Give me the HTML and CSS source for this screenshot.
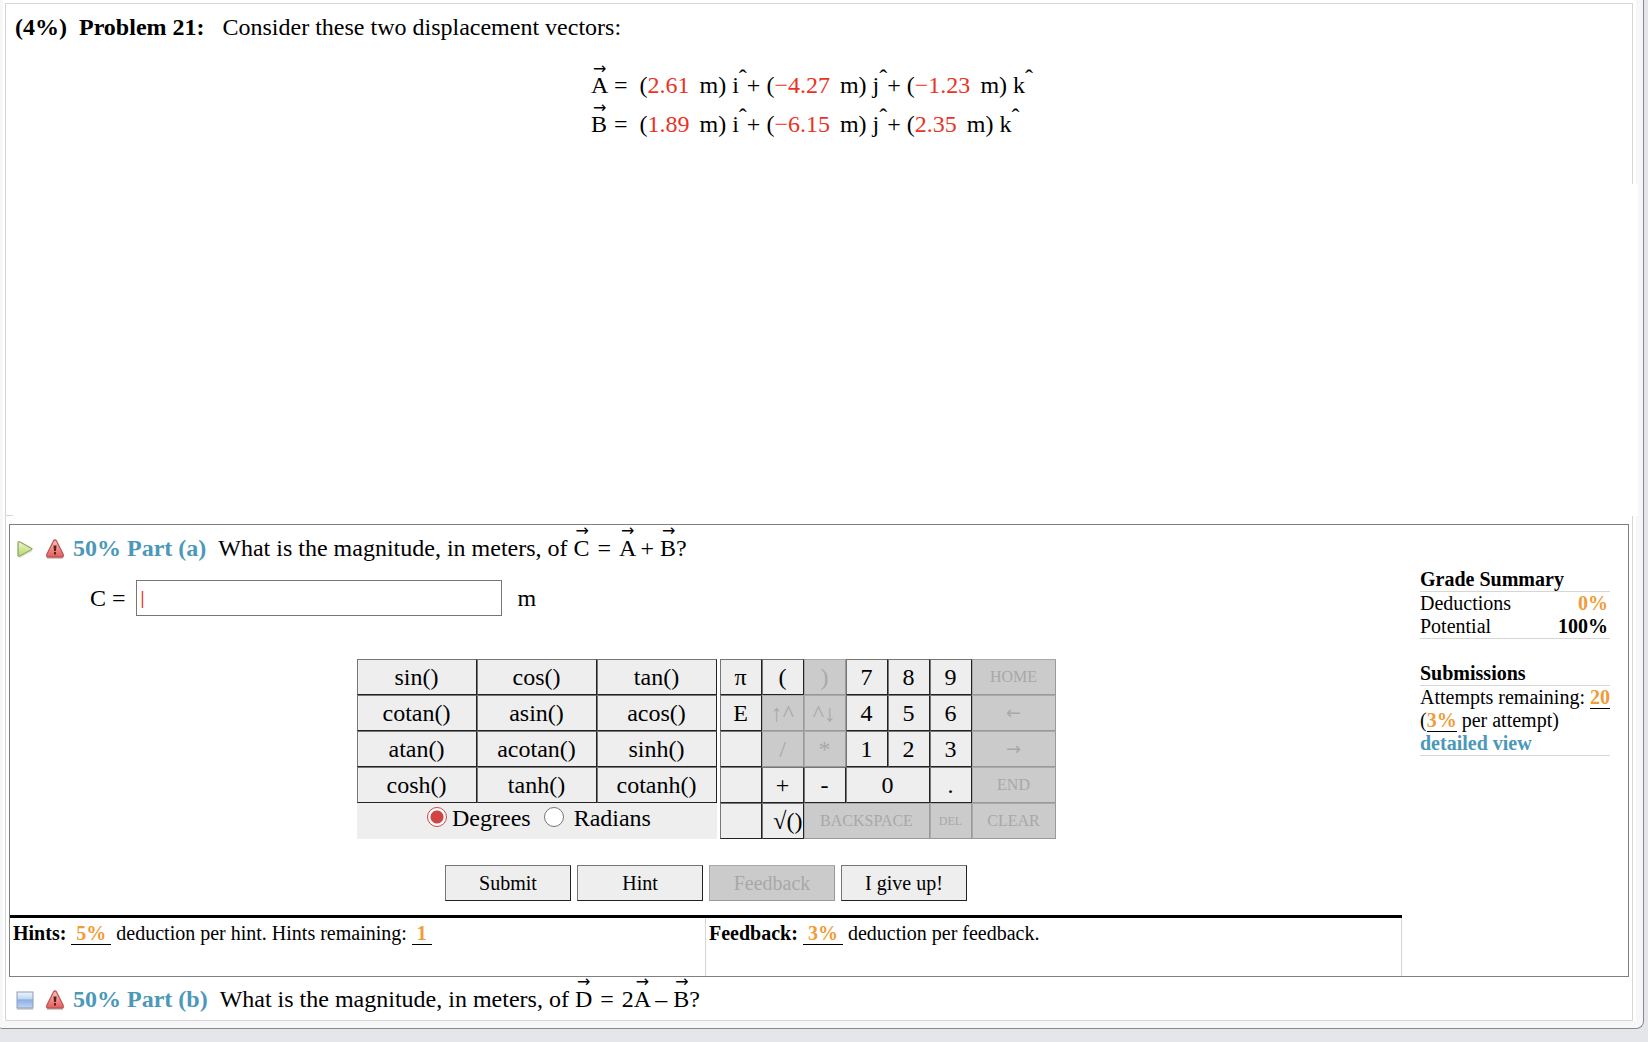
FILE: index.html
```html
<!DOCTYPE html>
<html lang="en">
<head>
    <meta charset="UTF-8">
    <meta name="viewport" content="width=device-width, initial-scale=1.0">
    <title>Problem 21</title>
    <link rel="stylesheet" href="styles.css">
</head>
<body>
    <main class="frame">
        <div class="sheet">
            <div class="panel">
                <section class="problem">
                    <h1 class="problem-title"><span>(4%)</span> <span>Problem 21:</span> <span class="problem-text">Consider these two displacement vectors:</span></h1>
                    <div class="equations">
                        <div class="equation">
                            <span class="vec">A</span><span class="equals">=</span><span class="term">(<b>2.61</b> <i>m)</i></span><span class="hat">i</span><span class="plus">+</span><span class="term">(<b>−4.27</b> <i>m)</i></span><span class="hat">j</span><span class="plus">+</span><span class="term">(<b>−1.23</b> <i>m)</i></span><span class="hat">k</span>
                        </div>
                        <div class="equation">
                            <span class="vec">B</span><span class="equals">=</span><span class="term">(<b>1.89</b> <i>m)</i></span><span class="hat">i</span><span class="plus">+</span><span class="term">(<b>−6.15</b> <i>m)</i></span><span class="hat">j</span><span class="plus">+</span><span class="term">(<b>2.35</b> <i>m)</i></span><span class="hat">k</span>
                        </div>
                    </div>
                </section>

                <div class="blank"></div>

                <div class="parts">
                    <section class="part-box">
                        <div class="work">
                            <div class="part-header">
                                <svg class="icon" width="20" height="22" viewBox="0 0 20 22">
                                    <defs>
                                        <linearGradient id="green" x1="0" y1="0" x2="0" y2="1">
                                            <stop offset="0" stop-color="#edf5cd"/>
                                            <stop offset="1" stop-color="#b5d66c"/>
                                        </linearGradient>
                                    </defs>
                                    <path d="M3 6 Q3 4 5 5 L16 11 Q18 12 16 13 L5 19 Q3 20 3 18 Z" fill="url(#green)" stroke="#8ea866" stroke-width="1.3"/>
                                    <path d="M4 21 L17 14" stroke="#ddd" fill="none"/>
                                </svg>
                                <svg class="icon" width="20" height="22" viewBox="0 0 20 22">
                                    <defs>
                                        <linearGradient id="red" x1="0" y1="0" x2="0" y2="1">
                                            <stop offset="0" stop-color="#f4c5bf"/>
                                            <stop offset="1" stop-color="#e35b5b"/>
                                        </linearGradient>
                                    </defs>
                                    <path d="M2 21 H18" stroke="#ccc" stroke-width="2"/>
                                    <path d="M8.5 4 Q10 2 11.5 4 L18 17 Q19 20 17 20 H3 Q1 20 2 17 Z" fill="url(#red)" stroke="#c25555" stroke-width="1.3"/>
                                    <path d="M8.5 8.5 H11.5 L11 14 H9 Z M9 15 H11 V17.5 H9 Z" fill="#5e1d1d"/>
                                </svg>
                                <h2 class="part-title">50% Part (a)</h2>
                                <p class="question">What is the magnitude, in meters, of <span class="vec">C</span><span class="op">=</span><span class="vec">A</span><span class="sign">+</span><span class="vec">B</span>?</p>
                            </div>

                            <div class="answer">
                                <label for="answer">C =</label>
                                <input id="answer" class="answer-input" type="text" value="|">
                                <span class="unit">m</span>
                            </div>

                            <div class="calculator">
                                <div class="functions">
                                    <button class="key">sin()</button>
                                    <button class="key">cos()</button>
                                    <button class="key">tan()</button>
                                    <button class="key">cotan()</button>
                                    <button class="key">asin()</button>
                                    <button class="key">acos()</button>
                                    <button class="key">atan()</button>
                                    <button class="key">acotan()</button>
                                    <button class="key">sinh()</button>
                                    <button class="key">cosh()</button>
                                    <button class="key">tanh()</button>
                                    <button class="key">cotanh()</button>
                                    <div class="angle-mode">
                                        <input type="radio" name="angle" id="degrees" checked>
                                        <label for="degrees">Degrees</label>
                                        <input type="radio" name="angle" id="radians">
                                        <label for="radians" class="radians">Radians</label>
                                    </div>
                                </div>
                                <div class="numpad">
                                    <button class="key">π</button>
                                    <button class="key">(</button>
                                    <button class="key" disabled>)</button>
                                    <button class="key">7</button>
                                    <button class="key">8</button>
                                    <button class="key">9</button>
                                    <button class="key wide small" disabled>HOME</button>
                                    <button class="key">E</button>
                                    <button class="key" disabled>↑^</button>
                                    <button class="key" disabled>^↓</button>
                                    <button class="key">4</button>
                                    <button class="key">5</button>
                                    <button class="key">6</button>
                                    <button class="key wide arrow" disabled>←</button>
                                    <button class="key" aria-label="blank"></button>
                                    <button class="key" disabled>/</button>
                                    <button class="key" disabled>*</button>
                                    <button class="key">1</button>
                                    <button class="key">2</button>
                                    <button class="key">3</button>
                                    <button class="key wide arrow" disabled>→</button>
                                    <button class="key" aria-label="blank"></button>
                                    <button class="key">+</button>
                                    <button class="key">-</button>
                                    <button class="key wide">0</button>
                                    <button class="key">.</button>
                                    <button class="key wide small" disabled>END</button>
                                    <button class="key" aria-label="blank"></button>
                                    <button class="key root">√()</button>
                                    <button class="key backspace small" disabled>BACKSPACE</button>
                                    <button class="key tiny" disabled>DEL</button>
                                    <button class="key wide small" disabled>CLEAR</button>
                                </div>
                            </div>

                            <div class="actions">
                                <button class="key action">Submit</button>
                                <button class="key action">Hint</button>
                                <button class="key action" disabled>Feedback</button>
                                <button class="key action">I give up!</button>
                            </div>

                            <div class="deductions">
                                <p class="deduction"><strong>Hints:</strong> <span class="amount padded">5%</span> deduction per hint. Hints remaining: <span class="amount padded">1</span></p>
                                <p class="deduction"><strong>Feedback:</strong> <span class="amount padded">3%</span> deduction per feedback.</p>
                            </div>
                        </div>

                        <aside class="sidebar">
                            <div class="summary">
                                <h3>Grade Summary</h3>
                                <div class="summary-row"><span>Deductions</span><strong class="orange">0%</strong></div>
                                <div class="summary-row"><span>Potential</span><strong>100%</strong></div>
                            </div>
                            <div class="summary">
                                <h3>Submissions</h3>
                                <p>Attempts remaining: <span class="amount">20</span></p>
                                <p>(<span class="amount">3%</span> per attempt)</p>
                                <a href="#" class="detail-link">detailed view</a>
                            </div>
                        </aside>
                    </section>

                    <section class="part-header part-b">
                        <svg class="icon" width="20" height="22" viewBox="0 0 20 22">
                            <defs>
                                <linearGradient id="blue" x1="0" y1="0" x2="0" y2="1">
                                    <stop offset="0" stop-color="#eef4fb"/>
                                    <stop offset="0.4" stop-color="#c5d9f1"/>
                                    <stop offset="0.5" stop-color="#8cb0e0"/>
                                    <stop offset="1" stop-color="#bdd5f3"/>
                                </linearGradient>
                            </defs>
                            <path d="M2 21 H18" stroke="#d5d5d5" stroke-width="2"/>
                            <rect x="2" y="4" width="16" height="16" fill="url(#blue)" stroke="#8c9db8"/>
                        </svg>
                        <svg class="icon" width="20" height="22" viewBox="0 0 20 22">
                            <path d="M2 21 H18" stroke="#ccc" stroke-width="2"/>
                            <path d="M8.5 4 Q10 2 11.5 4 L18 17 Q19 20 17 20 H3 Q1 20 2 17 Z" fill="url(#red)" stroke="#c25555" stroke-width="1.3"/>
                            <path d="M8.5 8.5 H11.5 L11 14 H9 Z M9 15 H11 V17.5 H9 Z" fill="#5e1d1d"/>
                        </svg>
                        <h2 class="part-title">50% Part (b)</h2>
                        <p class="question">What is the magnitude, in meters, of <span class="vec">D</span><span class="op">=</span>2<span class="vec">A</span><span class="sign">–</span><span class="vec">B</span>?</p>
                    </section>
                </div>
            </div>
        </div>
    </main>
</body>
</html>
```
FILE: styles.css
```css
* {
    margin: 0;
    padding: 0;
    box-sizing: border-box;
}

body {
    font-family: "Liberation Serif", "Times New Roman", serif;
    font-size: 24px;
    line-height: 28px;
    color: #000;
    background: #e5e6e9;
}

.frame {
    margin-right: 4px;
    padding: 0 7px 7px 3px;
    background: #f7f7f7;
    border-right: 1px solid #888;
    border-bottom: 1px solid #888;
    border-radius: 0 0 8px 2px;
}

.sheet {
    padding: 3px 3px 0 2px;
    background: #fff;
}

.panel {
    border-left: 1px solid #d6d6d6;
    border-bottom: 1px solid #d6d6d6;
}

/* problem statement */
.problem {
    padding: 9px 9px 40px;
    border-top: 1px solid #d6d6d6;
    border-right: 1px solid #d6d6d6;
}

.problem-title {
    font-size: 24px;
    font-weight: 700;
}

.problem-title span {
    margin-right: 6px;
}

.problem-title .problem-text {
    font-weight: 400;
    margin-left: 6px;
}

.equations {
    width: fit-content;
    margin: 25px auto 0;
    padding-right: 14px;
}

.equation {
    line-height: 39px;
    white-space: nowrap;
}

.equation b {
    font-weight: 400;
    color: #ea3323;
}

.equation i {
    font-style: normal;
    margin-left: 4px;
}

.equation .vec {
    display: inline-block;
    width: 18px;
    line-height: 28px;
}

.equals {
    margin: 0 12px 0 5px;
}

.hat {
    position: relative;
    margin: 0 8px 0 6px;
}

.hat::after {
    content: "ˆ";
    position: absolute;
    left: 100%;
    bottom: 6px;
    line-height: 28px;
}

.plus {
    margin-right: 6px;
}

.vec {
    position: relative;
}

.vec::before {
    content: "→";
    position: absolute;
    left: 2px;
    bottom: 22px;
    font-family: "DejaVu Sans", sans-serif;
    font-size: 16px;
    line-height: 16px;
}

.blank {
    position: relative;
    min-height: 332px;
    margin-right: -5px;
    background: #fff;
}

.blank::after {
    content: "";
    position: absolute;
    left: 0;
    bottom: 0;
    width: 7px;
    border-bottom: 1px solid #d6d6d6;
}

/* question parts */
.parts {
    padding: 8px 3px 7px;
    border-right: 1px solid #d6d6d6;
}

.part-box {
    display: flex;
    border: 1px solid #808080;
}

.work {
    flex: 1;
}

.part-header {
    display: flex;
    align-items: center;
    padding: 9px 0 0 5px;
}

.icon {
    flex: none;
    margin-right: 10px;
}

.part-title {
    font-size: 24px;
    color: #4b98b8;
    margin-left: -2px;
}

.question {
    margin-left: 12px;
}

.op {
    margin: 0 8px;
}

.sign {
    margin: 0 6px 0 4px;
}

.answer {
    display: flex;
    align-items: center;
    margin-top: 18px;
    padding-left: 80px;
}

.answer-input {
    width: 366px;
    height: 36px;
    margin: 0 16px 0 10px;
    padding: 0 4px;
    border: 1px solid #767676;
    font-family: inherit;
    font-size: 18px;
    font-weight: 700;
    color: #ea3323;
}

/* calculator */
.calculator {
    display: flex;
    justify-content: center;
    gap: 3px;
    margin-top: 43px;
}

.functions {
    display: grid;
    grid-template-columns: repeat(3, 120px);
    grid-auto-rows: 36px;
}

.numpad {
    display: grid;
    grid-template-columns: repeat(8, 42px);
    grid-auto-rows: 36px;
}

.key {
    border: 1px solid;
    border-color: #767676 #222 #222 #767676;
    background: #eee;
    color: #000;
    font-family: inherit;
    font-size: 24px;
    line-height: 28px;
    white-space: nowrap;
}

.key:disabled {
    background: #cbcbcb;
    border-color: #a9a9a9 #999 #999 #a9a9a9;
    color: #a8a8a8;
}

.wide {
    grid-column: span 2;
}

.backspace {
    grid-column: span 3;
}

.small {
    font-size: 16px;
}

.arrow {
    font-family: "DejaVu Sans", sans-serif;
    font-size: 18px;
}

.tiny {
    font-size: 12px;
}

.root {
    text-align: right;
}

.angle-mode {
    grid-column: span 3;
    display: flex;
    justify-content: center;
    padding: 1px 8px 0 0;
    background: #eee;
}

.angle-mode input {
    appearance: none;
    width: 20px;
    height: 20px;
    margin: 3px 5px 0 13px;
    border: 1px solid #767676;
    border-radius: 50%;
    background: #fff;
}

.angle-mode input:checked {
    border-color: #d04444;
    background: radial-gradient(circle, #d04444 6px, #fff 7px);
}

.radians {
    margin-left: 5px;
}

.actions {
    display: flex;
    justify-content: center;
    gap: 6px;
    margin: 26px 0 14px;
}

.action {
    width: 126px;
    height: 36px;
    font-size: 20px;
}

/* deductions */
.deductions {
    display: grid;
    grid-template-columns: 1fr 1fr;
    border-top: 3px solid #000;
    font-size: 20px;
    line-height: 24px;
}

.deduction {
    min-height: 58px;
    padding: 3px;
    border-right: 1px solid #d6d6d6;
}

.amount {
    font-weight: 700;
    color: #f09c37;
    border-bottom: 1px solid #000;
}

.padded {
    padding: 0 5px;
}

/* grade summary */
.sidebar {
    flex: none;
    width: 226px;
    padding: 43px 18px 0;
    font-size: 20px;
    line-height: 23px;
}

.summary {
    margin-bottom: 23px;
    border-bottom: 1px solid #d6d6d6;
}

.summary h3 {
    font-size: 20px;
    border-bottom: 1px solid #d6d6d6;
}

.summary-row {
    display: flex;
    justify-content: space-between;
    padding-right: 2px;
}

.orange {
    color: #f09c37;
}

.detail-link {
    display: block;
    font-weight: 700;
    color: #4b98b8;
    text-decoration: none;
}

.part-b {
    padding: 8px 0 0 6px;
}
```
